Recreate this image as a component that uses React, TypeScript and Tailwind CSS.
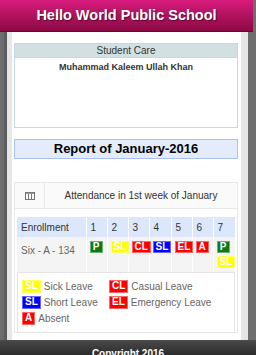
const Badge = ({ t, c }: { t: string; c: string }) => (
  <span
    className={`inline-flex items-center justify-center h-[12px] min-w-[13px] px-[2px] text-[10px] leading-none font-bold text-white border border-white/40 ${c}`}
  >
    {t}
  </span>
);

const colors: Record<string, string> = {
  P: "bg-[#0b7a12]",
  SLy: "bg-[#ffff00]",
  CL: "bg-[#ff0000]",
  SLb: "bg-[#0000ff]",
  EL: "bg-[#ff0000]",
  A: "bg-[#ff0000]",
};

const days: { t: string; k: string }[][] = [
  [{ t: "P", k: "P" }],
  [{ t: "SL", k: "SLy" }],
  [{ t: "CL", k: "CL" }],
  [{ t: "SL", k: "SLb" }],
  [{ t: "EL", k: "EL" }],
  [{ t: "A", k: "A" }],
  [
    { t: "P", k: "P" },
    { t: "SL", k: "SLy" },
  ],
];

const Legend = ({ t, k, label }: { t: string; k: string; label: string }) => (
  <div className="flex items-center gap-[3px] h-[16px]">
    <span
      className={`inline-flex items-center justify-center h-[13px] min-w-[10px] px-[2px] text-[10px] leading-none font-bold text-white border border-white/40 ${colors[k]}`}
    >
      {t}
    </span>
    <span className="text-[10px] text-[#666]">{label}</span>
  </div>
);

export default function App() {
  return (
    <div
      className="w-[256px] h-[355px] overflow-hidden bg-[#6e6e6e] flex flex-col"
      style={{ fontFamily: '"Liberation Sans", Arial, sans-serif' }}
    >
      <div className="h-[32px] w-[253px] shrink-0 flex items-center justify-center bg-gradient-to-b from-[#d81b7c] to-[#8c0a44] border-b border-[#6a0632]">
        <h1 className="text-[14.5px] font-bold text-white [text-shadow:1px_1px_1px_rgba(0,0,0,0.5)]">
          Hello World Public School
        </h1>
      </div>
      <div className="flex-1 flex min-h-0">
        <div className="w-[4px]" />
        <div className="w-[3px] bg-[#5c5c5c]" />
        <div className="w-[241px] bg-[#e6e6e6] pl-[5px] pr-[7px] flex">
          <div className="flex-1 bg-white pl-[2px] pr-[3px] pt-[11px]">
            <div className="border border-[#c6d5f7] h-[85px]">
              <div className="h-[14px] bg-[#d3e0e2] border-b border-[#c6d5f7] text-[10px] text-[#333] text-center leading-[13px]">
                Student Care
              </div>
              <div className="text-[9px] font-bold text-[#333] text-center mt-[3px]">
                Muhammad Kaleem Ullah Khan
              </div>
            </div>
            <div className="mt-[11px] h-[20px] bg-[#e4ecfc] border border-[#a9c1f2] flex items-center justify-center text-[13px] font-bold text-black">
              Report of January-2016
            </div>
            <div className="mt-[23px] border border-[#e8e8e8] h-[151px]">
              <div className="h-[26px] flex border-b border-[#e8e8e8] bg-[#fafafa]">
                <div className="w-[30px] border-r border-[#e8e8e8] flex items-center justify-center">
                  <svg width="10" height="8" viewBox="0 0 10 8">
                    <rect x="0.5" y="0.5" width="9" height="7" fill="none" stroke="#777" />
                    <path d="M3.5 1v6M6.5 1v6" stroke="#777" />
                    <path d="M1 1.5h8" stroke="#999" />
                  </svg>
                </div>
                <div className="flex-1 flex items-center justify-center text-[10px] text-[#333]">
                  Attendance in 1st week of January
                </div>
              </div>
              <div className="px-[2px] pt-[8px]">
                <table className="w-[218px] border-collapse text-[10px] table-fixed">
                  <colgroup>
                    <col className="w-[69px]" />
                    <col className="w-[21px]" />
                    <col className="w-[21px]" />
                    <col className="w-[21px]" />
                    <col className="w-[22px]" />
                    <col className="w-[21px]" />
                    <col className="w-[21px]" />
                    <col className="w-[22px]" />
                  </colgroup>
                  <thead>
                    <tr className="h-[20px] bg-[#dde7fb] text-[#333]">
                      <th className="text-left font-normal pl-[4px] border-r border-white">
                        Enrollment
                      </th>
                      {[1, 2, 3, 4, 5, 6, 7].map((d) => (
                        <th key={d} className="text-left font-normal pl-[4px] border-r border-white last:border-r-0">
                          {d}
                        </th>
                      ))}
                    </tr>
                  </thead>
                  <tbody>
                    <tr className="h-[35px] bg-[#f4f4f4] align-top">
                      <td className="pl-[4px] pt-[6px] text-[#666] border-r border-white">
                        Six - A - 134
                      </td>
                      {days.map((d, i) => (
                        <td key={i} className="pl-[3px] pt-[4px] border-r border-white last:border-r-0">
                          <div className="flex flex-col items-start gap-[3px]">
                            {d.map((b, j) => (
                              <Badge key={j} t={b.t} c={colors[b.k]} />
                            ))}
                          </div>
                        </td>
                      ))}
                    </tr>
                  </tbody>
                </table>
                <div className="w-[218px] h-[61px] border border-[#e4e4e4] pl-[4px] pt-[5px] grid grid-cols-[87px_1fr] content-start">
                  <Legend t="SL" k="SLy" label="Sick Leave" />
                  <Legend t="CL" k="CL" label="Casual Leave" />
                  <Legend t="SL" k="SLb" label="Short Leave" />
                  <Legend t="EL" k="EL" label="Emergency Leave" />
                  <Legend t="A" k="A" label="Absent" />
                </div>
              </div>
            </div>
          </div>
        </div>
      </div>
      <div className="h-[15px] shrink-0 bg-gradient-to-b from-[#4a4a4a] to-[#2c2c2c] flex justify-center pt-[9px]">
        <span className="text-[10px] font-bold text-white leading-none">Copyright 2016</span>
      </div>
    </div>
  );
}
